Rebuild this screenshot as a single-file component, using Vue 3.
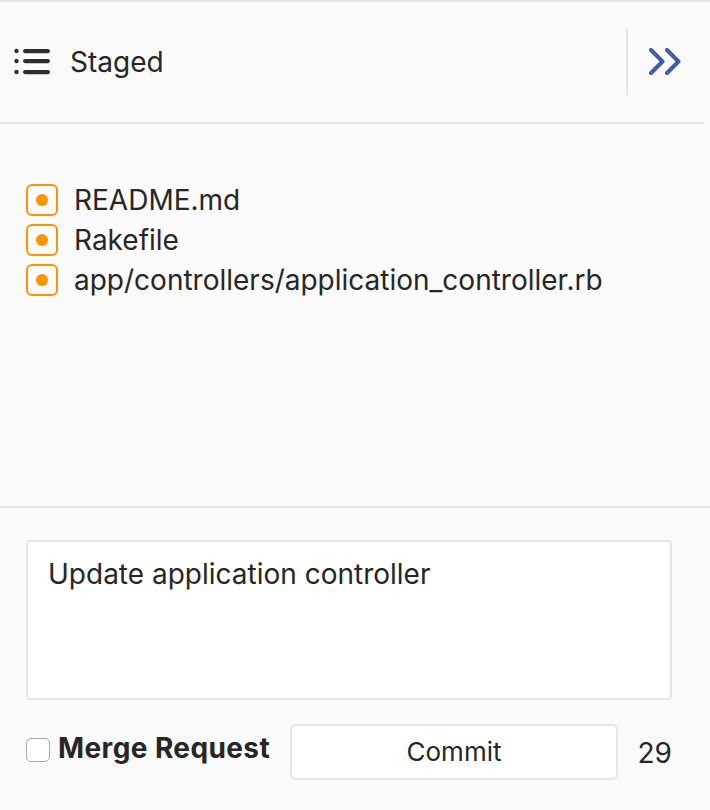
<script setup>
const files = ['README.md', 'Rakefile', 'app/controllers/application_controller.rb']
</script>

<template>
  <div class="panel">
    <header class="head">
      <svg class="list-icon" width="38" height="28" viewBox="0 0 38 28">
        <circle cx="3.5" cy="4" r="2.2" />
        <circle cx="3.5" cy="14" r="2.2" />
        <circle cx="3.5" cy="25" r="2.2" />
        <rect x="10" y="2" width="27" height="4.2" rx="2.1" />
        <rect x="10" y="12" width="27" height="4.2" rx="2.1" />
        <rect x="10" y="23" width="27" height="4.2" rx="2.1" />
      </svg>
      <span class="title">Staged</span>
      <div class="collapse">
        <svg width="34" height="28" viewBox="0 0 34 28" fill="none">
          <path class="blue" d="M3 2 L14.5 13.5 L3 25" />
          <path class="blue" d="M19 2 L30.5 13.5 L19 25" />
          <path class="fleck" d="M3 2 L14.5 13.5 L3 25" />
          <path class="fleck" d="M19 2 L30.5 13.5 L19 25" />
        </svg>
      </div>
    </header>
    <ul class="files">
      <li v-for="f in files" :key="f" class="file">
        <span class="badge"><i class="dot"></i></span>
        <span>{{ f }}</span>
      </li>
    </ul>
    <form class="form" @submit.prevent>
      <div class="message">Update application controller</div>
      <div class="actions">
        <label class="merge">
          <span class="check"></span>
          <span class="merge-text">Merge Request</span>
        </label>
        <button class="commit" type="button">Commit</button>
        <span class="count">29</span>
      </div>
    </form>
  </div>
</template>

<style>
html, body { margin: 0; background: #fafafa; }
</style>

<style scoped>
.panel {
  width: 710px;
  height: 810px;
  background: #fafafa;
  color: #262626;
  font-family: Inter, "Liberation Sans", sans-serif;
  font-size: 28px;
  display: flex;
  flex-direction: column;
  box-sizing: border-box;
  border-top: 2px solid #e5e5e5;
  overflow: hidden;
}
.head {
  height: 120px;
  margin-right: 6px;
  box-sizing: content-box;
  border-bottom: 2px solid #e5e5e5;
  display: flex;
  align-items: center;
  padding-left: 13px;
  padding-right: 22px;
  flex: none;
}
.list-icon { fill: #2e2e2e; margin-top: -2px; flex: none; }
.title { margin-left: 19px; flex: 1; line-height: 34px; }
.collapse {
  height: 66px;
  border-left: 2px solid #e5e5e5;
  display: flex;
  align-items: center;
  padding-left: 20px;
  width: 34px;
}
.collapse path {
  stroke-linecap: round;
  stroke-linejoin: round;
}
.collapse .blue {
  stroke: #3f57a8;
  stroke-width: 4;
}
.collapse .fleck {
  stroke: #b8864f;
  stroke-width: 1;
  stroke-linecap: butt;
  stroke-dasharray: 1.2 4;
}
.files {
  list-style: none;
  margin: 0;
  padding: 56px 0 0 26px;
  height: 382px;
  box-sizing: border-box;
  flex: none;
}
.file {
  height: 40px;
  display: flex;
  align-items: center;
  gap: 16px;
  line-height: 34px;
}
.badge {
  width: 32px;
  height: 32px;
  box-sizing: border-box;
  border: 2px solid #fc9403;
  border-radius: 6px;
  display: flex;
  align-items: center;
  justify-content: center;
  flex: none;
}
.dot {
  width: 12px;
  height: 12px;
  border-radius: 50%;
  background: #fc9403;
}
.form {
  border-top: 2px solid #e5e5e5;
  padding: 32px 38px 0 26px;
}
.message {
  height: 160px;
  box-sizing: border-box;
  background: #fff;
  border: 2px solid #e5e5e5;
  border-radius: 4px;
  padding: 14px 20px;
  line-height: 36px;
}
.actions {
  display: flex;
  align-items: center;
  margin-top: 24px;
  height: 56px;
}
.merge {
  display: flex;
  align-items: center;
  gap: 8px;
  font-weight: 700;
  margin-top: -6px;
  width: 264px;
  flex: none;
}
.merge-text { letter-spacing: 0.4px; margin-top: -2px; white-space: nowrap; }
.check {
  width: 24px;
  height: 24px;
  box-sizing: border-box;
  background: #fff;
  border: 1px solid #a8a8a8;
  border-radius: 5px;
  flex: none;
  margin-top: 2px;
}
.commit {
  width: 328px;
  height: 56px;
  box-sizing: border-box;
  background: #fff;
  border: 2px solid #e5e5e5;
  border-radius: 6px;
  font: inherit;
  font-size: 26px;
  color: inherit;
  padding: 0 0 2px;
  flex: none;
}
.count { margin-left: auto; padding-top: 2px; }
</style>
